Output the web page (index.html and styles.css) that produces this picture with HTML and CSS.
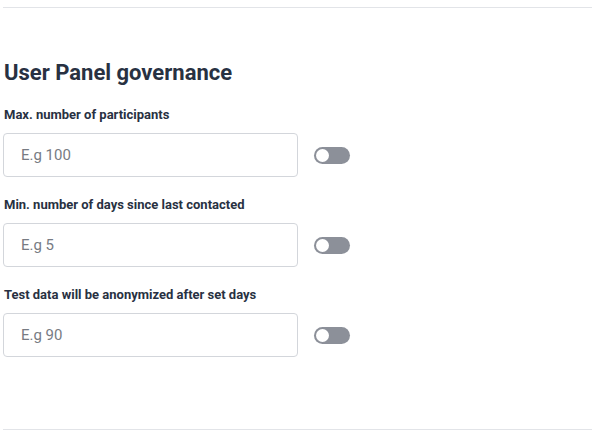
FILE: index.html
```html
<!DOCTYPE html>
<html lang="en">
<head>
<meta charset="utf-8">
<title>User Panel governance</title>
<link rel="stylesheet" href="styles.css">
</head>
<body>
<div class="page">
  <hr class="divider">
  <section class="section">
    <h2 class="title">User Panel governance</h2>
    <div class="field">
      <label class="label">Max. number of participants</label>
      <div class="row">
        <input class="input" type="text" placeholder="E.g 100">
        <span class="toggle"><span class="knob"></span></span>
      </div>
    </div>
    <div class="field">
      <label class="label">Min. number of days since last contacted</label>
      <div class="row">
        <input class="input" type="text" placeholder="E.g 5">
        <span class="toggle"><span class="knob"></span></span>
      </div>
    </div>
    <div class="field">
      <label class="label">Test data will be anonymized after set days</label>
      <div class="row">
        <input class="input" type="text" placeholder="E.g 90">
        <span class="toggle"><span class="knob"></span></span>
      </div>
    </div>
  </section>
  <hr class="divider">
</div>
</body>
</html>
```

FILE: styles.css
```css
* { box-sizing: border-box; }
html, body { margin: 0; padding: 0; background: #ffffff; }
body { font-family: Roboto, "Liberation Sans", sans-serif; color: #283142; }
.page { padding: 7px 4px 0 3px; width: 596px; }
.divider { border: 0; border-top: 1px solid #e2e4e8; margin: 0; height: 0; }
.section { padding: 51px 0 72px 0; }
.title { margin: 0 0 0 1px; font-size: 22px; line-height: 28px; font-weight: 700; color: #283142; }
.field { margin-top: 0; }
.label { display: block; margin: 20px 0 0 1px; font-size: 13px; line-height: 16px; font-weight: 700; color: #283142; }
.field + .field .label { margin-top: 20px; }
.row { display: flex; align-items: center; gap: 16px; margin-top: 10px; }
.input { width: 295px; height: 44px; border: 1px solid #d3d6db; border-radius: 4px; padding: 0 17px; font-family: Roboto, "Liberation Sans", sans-serif; font-size: 15px; color: #283142; background: #fff; outline: none; }
.input::placeholder { color: #777b83; }
.toggle { position: relative; display: inline-block; width: 36px; height: 17px; border-radius: 9px; background: #8c9099; }
.knob { position: absolute; left: 2px; top: 2px; width: 13px; height: 13px; border-radius: 50%; background: #ffffff; }
```
